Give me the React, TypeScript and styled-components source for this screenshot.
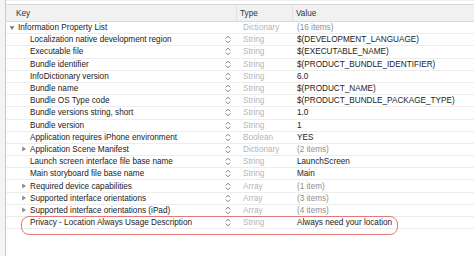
import React from 'react'
import styled, { createGlobalStyle } from 'styled-components'

const GlobalStyle = createGlobalStyle`
  html, body {
    margin: 0;
    padding: 0;
    background: #ffffff;
  }
  body {
    font-family: "Liberation Sans", Arial, sans-serif;
    font-size: 8.2px;
    color: #222222;
    -webkit-font-smoothing: antialiased;
  }
`

interface Entry {
  key: string
  type: string
  value: string
  level: 0 | 1
  disclosure?: 'open' | 'closed'
  muted?: boolean
  highlight?: boolean
}

const entries: Entry[] = [
  { key: 'Information Property List', type: 'Dictionary', value: '(16 items)', level: 0, disclosure: 'open', muted: true },
  { key: 'Localization native development region', type: 'String', value: '$(DEVELOPMENT_LANGUAGE)', level: 1 },
  { key: 'Executable file', type: 'String', value: '$(EXECUTABLE_NAME)', level: 1 },
  { key: 'Bundle identifier', type: 'String', value: '$(PRODUCT_BUNDLE_IDENTIFIER)', level: 1 },
  { key: 'InfoDictionary version', type: 'String', value: '6.0', level: 1 },
  { key: 'Bundle name', type: 'String', value: '$(PRODUCT_NAME)', level: 1 },
  { key: 'Bundle OS Type code', type: 'String', value: '$(PRODUCT_BUNDLE_PACKAGE_TYPE)', level: 1 },
  { key: 'Bundle versions string, short', type: 'String', value: '1.0', level: 1 },
  { key: 'Bundle version', type: 'String', value: '1', level: 1 },
  { key: 'Application requires iPhone environment', type: 'Boolean', value: 'YES', level: 1 },
  { key: 'Application Scene Manifest', type: 'Dictionary', value: '(2 items)', level: 1, disclosure: 'closed', muted: true },
  { key: 'Launch screen interface file base name', type: 'String', value: 'LaunchScreen', level: 1 },
  { key: 'Main storyboard file base name', type: 'String', value: 'Main', level: 1 },
  { key: 'Required device capabilities', type: 'Array', value: '(1 item)', level: 1, disclosure: 'closed', muted: true },
  { key: 'Supported interface orientations', type: 'Array', value: '(3 items)', level: 1, disclosure: 'closed', muted: true },
  { key: 'Supported interface orientations (iPad)', type: 'Array', value: '(4 items)', level: 1, disclosure: 'closed', muted: true },
  { key: 'Privacy - Location Always Usage Description', type: 'String', value: 'Always need your location', level: 1, highlight: true },
]

function Stepper() {
  return (
    <StepperIcon width="6" height="9" viewBox="0 0 6 9">
      <path d="M1 3.2 L3 1.2 L5 3.2" fill="none" stroke="#6d6d6d" strokeWidth="0.9" strokeLinecap="round" strokeLinejoin="round" />
      <path d="M1 5.8 L3 7.8 L5 5.8" fill="none" stroke="#6d6d6d" strokeWidth="0.9" strokeLinecap="round" strokeLinejoin="round" />
    </StepperIcon>
  )
}

function Disclosure({ open }: { open: boolean }) {
  return (
    <Triangle width="6" height="6" viewBox="0 0 6 6">
      {open ? (
        <path d="M0.5 1.2 L5.5 1.2 L3 5 Z" fill="#7a7a7a" />
      ) : (
        <path d="M1.2 0.5 L5 3 L1.2 5.5 Z" fill="#8a8a8a" />
      )}
    </Triangle>
  )
}

export default function App() {
  return (
    <>
      <GlobalStyle />
      <Window>
        <Gutter />
        <Table>
          <Header>
            <KeyHead>Key</KeyHead>
            <TypeHead>Type</TypeHead>
            <ValueHead>Value</ValueHead>
          </Header>
          {entries.map((e) => (
            <Row key={e.key}>
              <KeyCell $level={e.level}>
                <TriangleSlot>{e.disclosure && <Disclosure open={e.disclosure === 'open'} />}</TriangleSlot>
                <KeyText>{e.key}</KeyText>
                {e.level === 1 && <Stepper />}
              </KeyCell>
              <TypeCell>{e.type}</TypeCell>
              <ValueCell $muted={e.muted}>{e.value}</ValueCell>
              {e.highlight && <Highlight />}
            </Row>
          ))}
        </Table>
      </Window>
    </>
  )
}

const Window = styled.div`
  display: flex;
  width: 474px;
  height: 256px;
  overflow: hidden;
  background: #ffffff;
`

const Gutter = styled.div`
  width: 5px;
  flex-shrink: 0;
  background: #f4f4f4;
  border-right: 1px solid #c9c9c9;
`

const Table = styled.div`
  flex: 1;
  display: flex;
  flex-direction: column;
  padding-top: 3px;
  background: #ffffff;
  border-top: 1px solid #f0f0f0;
`

const Header = styled.div`
  display: grid;
  grid-template-columns: 231px 56px 1fr;
  height: 16px;
  align-items: center;
  background: #f1f1f1;
  border-top: 1px solid #d6d6d6;
  border-bottom: 1px solid #d9d9d9;
  color: #333333;
`

const HeadCell = styled.div`
  height: 100%;
  display: flex;
  align-items: center;
`

const KeyHead = styled(HeadCell)`
  padding-left: 10px;
  border-right: 1px solid #e2e2e2;
`

const TypeHead = styled(HeadCell)`
  padding-left: 3px;
  border-right: 1px solid #e2e2e2;
`

const ValueHead = styled(HeadCell)`
  padding-left: 3px;
`

const Row = styled.div`
  position: relative;
  display: grid;
  grid-template-columns: 231px 56px 1fr;
  height: 12.2px;
  align-items: center;
  border-bottom: 1px solid #ededed;
  box-sizing: border-box;
  white-space: nowrap;
`

const KeyCell = styled.div<{ $level: number }>`
  display: flex;
  align-items: center;
  padding-left: ${(p) => (p.$level === 0 ? 3 : 15)}px;
  padding-right: 6px;
  color: #222222;
`

const TriangleSlot = styled.span`
  width: 9px;
  flex-shrink: 0;
  display: flex;
  align-items: center;
`

const Triangle = styled.svg`
  display: block;
`

const KeyText = styled.span`
  flex: 1;
`

const StepperIcon = styled.svg`
  display: block;
  flex-shrink: 0;
`

const TypeCell = styled.div`
  padding-left: 6px;
  color: #b5b5b5;
`

const ValueCell = styled.div<{ $muted?: boolean }>`
  padding-left: 4px;
  color: ${(p) => (p.$muted ? '#8f8f8f' : '#222222')};
`

const Highlight = styled.div`
  position: absolute;
  left: 15px;
  top: -1px;
  width: 377px;
  height: 19px;
  border: 1px solid #e07a78;
  border-radius: 8px;
  box-sizing: border-box;
  pointer-events: none;
`
